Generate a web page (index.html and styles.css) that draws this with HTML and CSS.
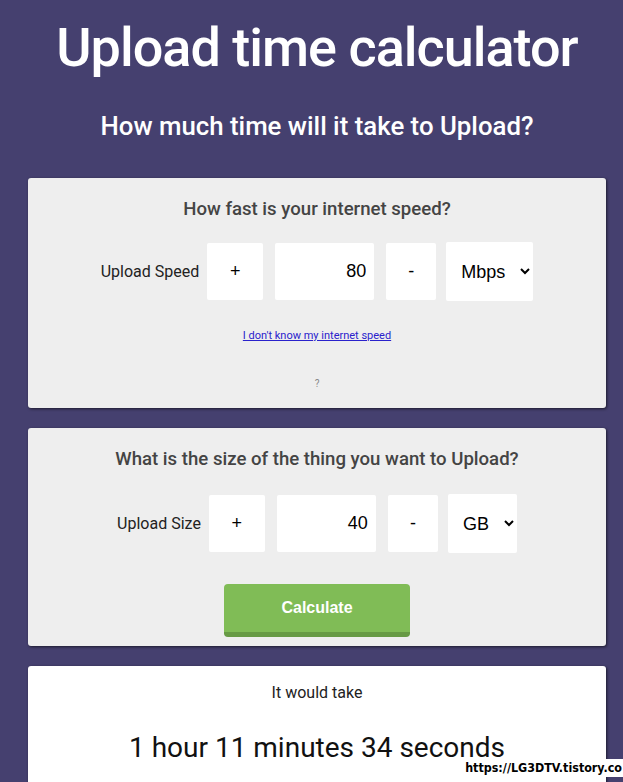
FILE: index.html
```html
<!DOCTYPE html>
<html lang="en">
<head>
<meta charset="utf-8">
<title>Upload time calculator</title>
<link rel="stylesheet" href="styles.css">
</head>
<body>
<div class="page">
  <h1 class="title">Upload time calculator</h1>
  <h2 class="subtitle">How much time will it take to Upload?</h2>

  <section class="card card-speed">
    <h3 class="card-heading">How fast is your internet speed?</h3>
    <div class="field-row">
      <label class="field-label">Upload Speed</label>
      <button class="step step-plus" type="button">+</button>
      <input class="num" type="text" value="80">
      <button class="step step-minus" type="button">-</button>
      <select class="unit unit-speed">
        <option>Mbps</option>
      </select>
    </div>
    <a class="help-link" href="#">I don't know my internet speed</a>
    <div class="hint">?</div>
  </section>

  <section class="card card-size">
    <h3 class="card-heading">What is the size of the thing you want to Upload?</h3>
    <div class="field-row">
      <label class="field-label">Upload Size</label>
      <button class="step step-plus" type="button">+</button>
      <input class="num" type="text" value="40">
      <button class="step step-minus" type="button">-</button>
      <select class="unit unit-size">
        <option>GB</option>
      </select>
    </div>
    <button class="calc" type="button">Calculate</button>
  </section>

  <section class="card card-result">
    <div class="result-label">It would take</div>
    <div class="result-value">1 hour 11 minutes 34 seconds</div>
  </section>
</div>
<div class="watermark">https://LG3DTV.tistory.co</div>
</body>
</html>
```

FILE: styles.css
```css
html, body {
  margin: 0;
  padding: 0;
  overflow: hidden;
}
body {
  background: #45406f;
  font-family: Roboto, "Liberation Sans", Arial, sans-serif;
  height: 782px;
  position: relative;
}
.page {
  padding: 14px 17px 0 28px;
}
.title {
  margin: 0;
  font-size: 54px;
  line-height: 67px;
  font-weight: 500;
  letter-spacing: -1px;
  color: #ffffff;
  text-align: center;
}
.subtitle {
  margin: 31px 0 0;
  font-size: 25.8px;
  line-height: 29px;
  font-weight: 500;
  color: #ffffff;
  text-align: center;
}
.card {
  background: #eeeeee;
  border-radius: 3px;
  box-shadow: 1px 1px 3px rgba(0, 0, 0, 0.6);
  display: flex;
  flex-direction: column;
  align-items: center;
}
.card-speed {
  margin-top: 37px;
  height: 230px;
  box-sizing: border-box;
  padding-top: 21px;
}
.card-size {
  margin-top: 20px;
  height: 218px;
  box-sizing: border-box;
  padding-top: 21px;
}
.card-result {
  margin-top: 20px;
  background: #ffffff;
  height: 140px;
  box-sizing: border-box;
  padding-top: 17px;
}
.card-heading {
  margin: 0;
  font-size: 18.6px;
  line-height: 21px;
  font-weight: 500;
  color: #444444;
}
.field-row {
  display: flex;
  align-items: center;
  margin-top: 22px;
}
.card-size .field-row {
  margin-top: 24px;
}
.field-label {
  font-size: 16px;
  color: #222222;
  margin-right: 8px;
}
.step {
  width: 56px;
  height: 57px;
  border: none;
  border-radius: 2px;
  background: #ffffff;
  font-family: "Liberation Sans", Arial, sans-serif;
  font-size: 18px;
  color: #000000;
  padding: 0;
}
.step-minus {
  width: 50px;
}
.num {
  width: 99px;
  height: 57px;
  box-sizing: border-box;
  border: none;
  border-radius: 2px;
  background: #ffffff;
  font-family: "Liberation Sans", Arial, sans-serif;
  font-size: 18px;
  color: #000000;
  text-align: right;
  padding: 0 8px 0 0;
  margin: 0 12px;
  outline: none;
}
.unit {
  margin-left: 10px;
  height: 59px;
  border: none;
  border-radius: 2px;
  background: #ffffff;
  font-family: "Liberation Sans", Arial, sans-serif;
  font-size: 18px;
  color: #000000;
  padding: 0 4px 0 11px;
}
.unit-speed {
  width: 87px;
}
.unit-size {
  width: 69px;
}
.help-link {
  margin-top: 28px;
  font-size: 11px;
  line-height: 13px;
  color: #2a22cc;
  text-decoration: underline;
}
.hint {
  margin-top: 36px;
  font-size: 10px;
  line-height: 12px;
  color: #888888;
}
.calc {
  margin-top: 31px;
  width: 186px;
  height: 53px;
  border: none;
  border-bottom: 5px solid #679a45;
  border-radius: 4px;
  background: #80bc56;
  color: #ffffff;
  font-family: "Liberation Sans", Arial, sans-serif;
  font-weight: 700;
  font-size: 16px;
  padding: 0;
}
.result-label {
  font-size: 16px;
  line-height: 19px;
  color: #222222;
}
.result-value {
  margin-top: 29px;
  font-size: 28px;
  line-height: 33px;
  color: #111111;
}
.watermark {
  position: absolute;
  right: 0;
  top: 759px;
  white-space: nowrap;
  background: #ffffff;
  color: #000000;
  font-family: "DejaVu Sans Condensed", "Liberation Sans", sans-serif;
  font-weight: 700;
  font-size: 12.4px;
  line-height: 18px;
  padding: 0 1px 0 3px;
}
```
